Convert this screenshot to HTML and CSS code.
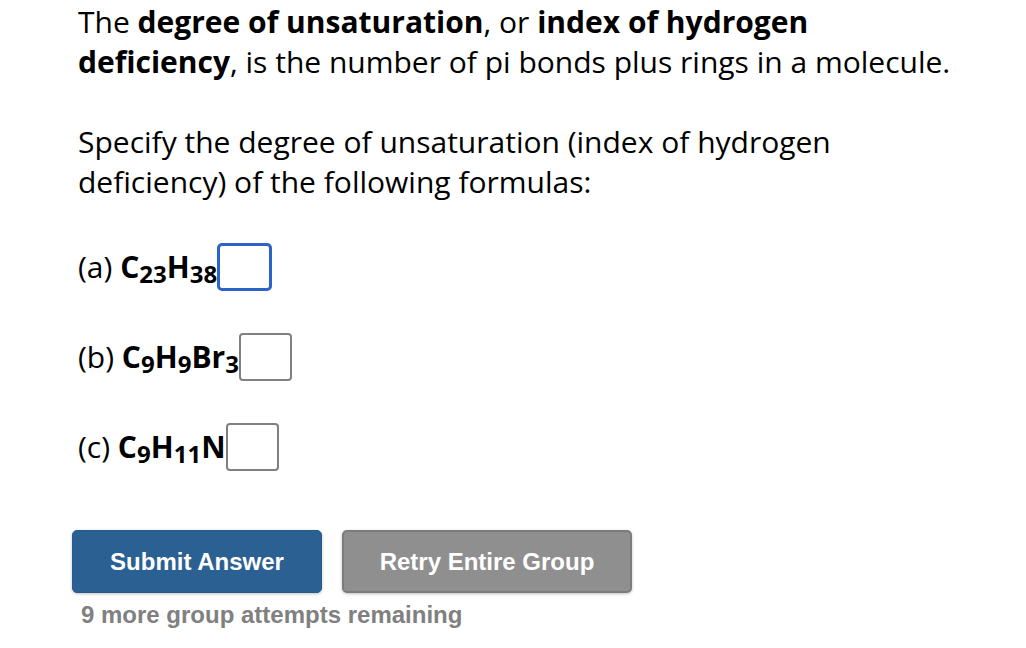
FILE: index.html
```html
<!DOCTYPE html>
<html lang="en">
<head>
<meta charset="utf-8">
<title>Degree of unsaturation</title>
<link rel="stylesheet" href="styles.css">
</head>
<body>
<main class="question">
  <p class="text intro">The <b>degree of unsaturation</b>, or <b>index of hydrogen deficiency</b>, is the number of pi bonds plus rings in a molecule.</p>
  <p class="text ask">Specify the degree of unsaturation (index of hydrogen deficiency) of the following formulas:</p>

  <div class="row">
    <span class="label">(a) <b>C<sub>23</sub>H<sub>38</sub></b></span><input class="answer focused" type="text" aria-label="(a)">
  </div>
  <div class="row">
    <span class="label">(b) <b>C<sub>9</sub>H<sub>9</sub>Br<sub>3</sub></b></span><input class="answer" type="text" aria-label="(b)">
  </div>
  <div class="row">
    <span class="label">(c) <b>C<sub>9</sub>H<sub>11</sub>N</b></span><input class="answer" type="text" aria-label="(c)">
  </div>

  <div class="actions">
    <button class="btn btn-submit" type="button">Submit Answer</button>
    <button class="btn btn-retry" type="button">Retry Entire Group</button>
  </div>
  <p class="attempts">9 more group attempts remaining</p>
</main>
</body>
</html>
```

FILE: styles.css
```css
html, body {
  margin: 0;
  padding: 0;
  background: #ffffff;
}

.question {
  display: flex;
  flex-direction: column;
  align-items: flex-start;
  width: 880px;
  padding: 2px 0 0 78px;
  font-family: "Open Sans", "Liberation Sans", sans-serif;
  font-size: 30px;
  color: #000000;
}

.text {
  margin: 0;
  line-height: 40px;
}

.text b {
  font-weight: 700;
}

.ask {
  margin-top: 40px;
}

.row {
  display: flex;
  align-items: center;
  height: 48px;
  margin-top: 41px;
}

.row + .row {
  margin-top: 42px;
}

.label {
  line-height: 40px;
  white-space: nowrap;
}

.label b {
  font-weight: 700;
}

.label sub {
  font-size: 0.8em;
  line-height: 0;
  vertical-align: -0.22em;
}

.answer {
  box-sizing: border-box;
  width: 53px;
  height: 48px;
  margin: 0;
  padding: 0;
  border: 2px solid #808080;
  border-radius: 4px;
  background: #ffffff;
  font: inherit;
  outline: none;
}

.answer.focused {
  width: 55px;
  border: 3px solid #2d63c8;
  border-radius: 5px;
}

.actions {
  display: flex;
  gap: 20px;
  margin: 59px 0 0 -6px;
}

.btn {
  box-sizing: border-box;
  height: 63px;
  padding: 0;
  border-radius: 5px;
  font-family: "Liberation Sans", Arial, sans-serif;
  font-weight: 700;
  font-size: 24px;
  white-space: nowrap;
  color: #ffffff;
  cursor: pointer;
  box-shadow: 0 1px 3px rgba(0, 0, 0, 0.25);
}

.btn-submit {
  width: 250px;
  background: #2b6093;
  border: 1px solid #285a8b;
}

.btn-retry {
  width: 290px;
  background: #8f8f8f;
  border: 2px solid #7c7c7c;
}

.attempts {
  margin: 8px 0 0 3px;
  font-family: "Liberation Sans", Arial, sans-serif;
  font-weight: 700;
  font-size: 24px;
  line-height: 28px;
  color: #808080;
}
```
